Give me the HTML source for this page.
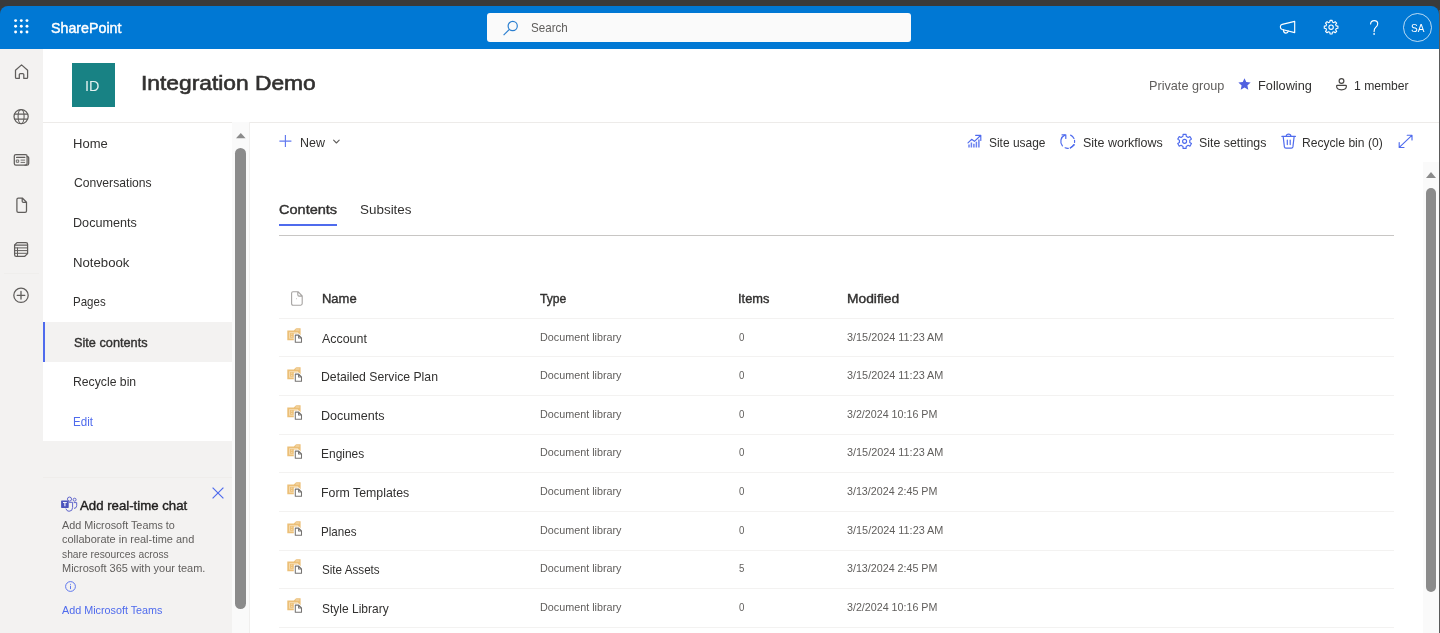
<!DOCTYPE html>
<html><head><meta charset="utf-8"><title>Integration Demo - Site contents</title>
<style>
html,body{margin:0;padding:0;}
body{width:1440px;height:633px;overflow:hidden;background:#fff;position:relative;font-family:"Liberation Sans", sans-serif;}
.t{position:absolute;white-space:nowrap;font-family:"Liberation Sans", sans-serif;transform-origin:0 50%;}
.b{position:absolute;}
svg{position:absolute;overflow:visible;}
</style></head><body>
<!-- window chrome strip -->
<div class="b" style="left:0;top:0;width:1440px;height:14px;background:#3a3a3a;"></div>
<!-- suite bar -->
<div class="b" style="left:0;top:5.5px;width:1439px;height:43px;background:#0078d4;border-radius:8px 8px 0 0;"></div>
<!-- right window edge -->
<div class="b" style="left:1439px;top:10px;width:1px;height:623px;background:#5a5a5a;"></div>
<!-- left rail -->
<div class="b" style="left:0;top:48.5px;width:43px;height:585px;background:#f3f2f1;"></div>
<!-- search box -->
<div class="b" style="left:487px;top:13px;width:424px;height:29px;background:#fafafa;border-radius:3px;"></div>
<!-- waffle -->
<svg style="left:14.3px;top:19.3px" width="14.6" height="14.6" viewBox="0 0 14.6 14.6" fill="#fff">
<circle cx="1.6" cy="1.6" r="1.45"/><circle cx="7.3" cy="1.6" r="1.45"/><circle cx="13" cy="1.6" r="1.45"/>
<circle cx="1.6" cy="7.3" r="1.45"/><circle cx="7.3" cy="7.3" r="1.45"/><circle cx="13" cy="7.3" r="1.45"/>
<circle cx="1.6" cy="13" r="1.45"/><circle cx="7.3" cy="13" r="1.45"/><circle cx="13" cy="13" r="1.45"/>
</svg>
<!-- search icon -->
<svg style="left:503px;top:20px" width="16" height="16" viewBox="0 0 16 16" fill="none" stroke="#2b7fd0" stroke-width="1.2">
<circle cx="9.7" cy="6" r="4.6"/><path d="M6.4 9.4 L0.6 15.2"/>
</svg>
<!-- topbar icons -->
<svg style="left:0;top:0" width="1440" height="48" viewBox="0 0 1440 48" fill="none" stroke="#fff" stroke-width="1.15" stroke-linejoin="round" stroke-linecap="round">
<path d="M1294.7 21.4 V32.6 L1282.2 29.5 Q1280.4 29 1280.4 27.3 V26.5 Q1280.4 24.9 1282.2 24.4 Z"/>
<path d="M1283.4 29.9 Q1283.6 33.2 1286 33.1 Q1287.9 33 1288.3 31.1"/>
<path d="M1330.02 20.38 L1332.18 20.38 L1332.34 22.05 L1333.87 22.68 L1335.16 21.62 L1336.68 23.14 L1335.62 24.43 L1336.25 25.96 L1337.92 26.12 L1337.92 28.28 L1336.25 28.44 L1335.62 29.97 L1336.68 31.26 L1335.16 32.78 L1333.87 31.72 L1332.34 32.35 L1332.18 34.02 L1330.02 34.02 L1329.86 32.35 L1328.33 31.72 L1327.04 32.78 L1325.52 31.26 L1326.58 29.97 L1325.95 28.44 L1324.28 28.28 L1324.28 26.12 L1325.95 25.96 L1326.58 24.43 L1325.52 23.14 L1327.04 21.62 L1328.33 22.68 L1329.86 22.05 Z" stroke-width="1.1"/>
<circle cx="1331.1" cy="27.2" r="2.2" stroke-width="1.1"/>
<path d="M1370.6 24 Q1370.8 20.6 1374.3 20.6 Q1377.7 20.6 1377.7 23.8 Q1377.7 25.8 1375.7 27.4 Q1374.1 28.7 1374.1 31.4"/><path d="M1374.1 33.4 V34.4" stroke-width="1.3"/>
</svg>
<!-- avatar -->
<div class="b" style="left:1403px;top:12.9px;width:27px;height:27px;border:1px solid rgba(255,255,255,0.72);border-radius:50%;"></div>
<!-- rail icons -->
<div class="b" style="left:4px;top:272.7px;width:35px;height:1px;background:#efeeec;"></div>
<svg style="left:0;top:0" width="60" height="320" viewBox="0 0 60 320" fill="none" stroke="#605e5c" stroke-width="1.25" stroke-linejoin="round" stroke-linecap="round">
<!-- home -->
<path d="M15.5 70.3 L21.55 64.9 L27.6 70.3 V77.4 Q27.6 78.4 26.6 78.4 H23.8 V74.6 Q23.8 73.5 22.7 73.5 H20.4 Q19.3 73.5 19.3 74.6 V78.4 H16.5 Q15.5 78.4 15.5 77.4 Z"/>
<!-- globe -->
<circle cx="21.1" cy="116.6" r="7.1"/><ellipse cx="21.1" cy="116.6" rx="3" ry="7.1" stroke-width="1.1"/><path d="M14.6 114.1 H27.6 M14.6 119.1 H27.6" stroke-width="1.1"/>
<!-- news -->
<rect x="14.3" y="154.5" width="12.8" height="10.7" rx="1.6"/>
<path d="M27.1 156.6 H27.5 Q28.7 156.6 28.7 157.8 V163.4 Q28.7 165.2 26.9 165.2 H25"/>
<path d="M16.6 157.4 H24.8" stroke-width="1.3"/><rect x="16.7" y="160" width="2" height="2.3" stroke-width="0.9"/><path d="M21 160.1 H24.7 M21 162.4 H24.7" stroke-width="0.9"/>
<!-- file -->
<path d="M18.3 198 H22.3 L26.5 202.2 V211 Q26.5 212.4 25.1 212.4 H18.3 Q16.9 212.4 16.9 211 V199.4 Q16.9 198 18.3 198 Z M22.2 198.2 V201.2 Q22.2 202.4 23.4 202.4 H26.3"/>
<!-- list -->
<path d="M17 242.6 H26 Q27.6 242.6 27.6 244.2 V253.6 L24.8 256.3 H16.2 Q14.6 256.3 14.6 254.7 V245 Z"/>
<path d="M15 245.1 H27.4" stroke-width="1.3"/><path d="M14.8 247.9 H27.4 M14.8 250.6 H27.4 M14.8 253.3 H27.2 M17.5 247.9 V256" stroke-width="1"/>
<!-- plus circle -->
<circle cx="21" cy="295.3" r="7.2"/><path d="M21 291.5 V299.1 M17.2 295.3 H24.8" stroke-width="1.3"/>
</svg>
<!-- site header -->
<div class="b" style="left:72.1px;top:63.2px;width:43.3px;height:43.5px;background:#188284;"></div>
<div class="b" style="left:43px;top:121.5px;width:1396px;height:1px;background:#edebe9;"></div>
<!-- star -->
<svg style="left:1238.3px;top:77.9px" width="13" height="12.1" viewBox="0 0 14 13" fill="#4f5fe0">
<path d="M7 0.2 L8.9 4.4 L13.6 4.9 L10.1 8 L11.1 12.6 L7 10.2 L2.9 12.6 L3.9 8 L0.4 4.9 L5.1 4.4 Z"/>
</svg>
<!-- person -->
<svg style="left:1336px;top:78px" width="11" height="13" viewBox="0 0 11 13" fill="none" stroke="#484644" stroke-width="1.15">
<circle cx="5.5" cy="3" r="2.4"/><path d="M1.3 7.3 H9.7 Q10.4 7.3 10.4 8 Q10.4 11.8 5.5 11.8 Q0.6 11.8 0.6 8 Q0.6 7.3 1.3 7.3 Z"/>
</svg>

<!-- left nav -->
<div class="b" style="left:43px;top:322px;width:189px;height:39.5px;background:#f3f2f1;"></div>
<div class="b" style="left:43px;top:322px;width:2px;height:39.5px;background:#4f6bed;"></div>
<div class="b" style="left:43px;top:441px;width:189px;height:192px;background:#f3f2f1;"></div>
<div class="b" style="left:43px;top:477px;width:189px;height:1px;background:#efedeb;"></div>
<!-- nav scrollbar -->
<div class="b" style="left:232px;top:122px;width:17px;height:511px;background:#fafafa;"></div>
<div class="b" style="left:249px;top:122px;width:1px;height:511px;background:#f0efee;"></div>
<div class="b" style="left:235px;top:148px;width:10.5px;height:461px;background:#8b8b8b;border-radius:5.5px;"></div>
<svg style="left:235.6px;top:132.6px" width="9.6" height="5.3" viewBox="0 0 9.6 5.3" fill="#8b8b8b"><path d="M0 5.3 L4.8 0 L9.6 5.3 Z"/></svg>
<!-- teams promo -->
<svg style="left:211.5px;top:486.5px" width="12" height="12" viewBox="0 0 12 12" stroke="#4f6bed" stroke-width="1.2" fill="none"><path d="M0.6 0.6 L11.4 11.4 M11.4 0.6 L0.6 11.4"/></svg>
<svg style="left:0;top:490px" width="100" height="30" viewBox="0 490 100 30" fill="none" stroke="#6166cc" stroke-width="1" stroke-linejoin="round">
<circle cx="69.5" cy="499.1" r="2.05"/>
<circle cx="74.6" cy="499.7" r="1.5"/>
<path d="M69 502.3 H72.6 V507.6 Q72.6 511.3 69 511.3 Q66.7 511.3 65.9 508.6"/>
<path d="M73.8 502.6 H76.7 V505.7 Q76.7 508.3 74 508.4"/>
<rect x="61.1" y="500.4" width="7.6" height="7.5" rx="0.6" fill="#4b53bc" stroke="none"/>
<path d="M63 502.5 H66.8 M64.9 502.5 V506.3" stroke="#f0f0fa" stroke-width="1.15"/>
</svg>
<svg style="left:64.5px;top:580.5px" width="11" height="11" viewBox="0 0 11 11" fill="none" stroke="#4f6bed" stroke-width="0.9"><circle cx="5.5" cy="5.5" r="4.9"/><path d="M5.5 4.8 V8.1 M5.5 2.9 V3.8"/></svg>

<!-- command bar -->
<svg style="left:0;top:120px" width="1440" height="40" viewBox="0 120 1440 40" fill="none" stroke="#4f6bed" stroke-width="1.2" stroke-linecap="round" stroke-linejoin="round">
<path d="M279.4 141.1 H291.4 M285.4 135.1 V147.1" stroke="#6179ef" stroke-width="1.15" stroke-linecap="butt"/>
<path d="M333.6 140.2 L336.4 143 L339.2 140.2" stroke="#605e5c" stroke-width="1.1"/>
<!-- usage -->
<path d="M968 142.8 L971.6 139.3 L974.4 141.3 L980.6 135.5 M975.6 135.3 H980.8 V140.4" stroke-width="1.15"/>
<path d="M969 147.6 V144.6 M971.4 147.6 V142.4 M973.9 147.6 V143.8 M976.4 147.6 V141.8 M978.9 147.6 V139.4" stroke-width="1.5" stroke-linecap="butt" stroke="#6b82f0"/>
<!-- workflows -->
<path d="M1062.41 145.84 A6.9 6.9 0 0 1 1064.78 135.15 M1070.62 135.15 A6.9 6.9 0 0 1 1073.95 138.48 M1074.53 140.44 A6.9 6.9 0 0 1 1074.53 142.36 M1073.79 144.64 A6.9 6.9 0 0 1 1070.28 147.80 M1068.42 148.26 A6.9 6.9 0 0 1 1065.12 147.80"/>
<path d="M1062 134.8 H1065.8 V138.4" />
<path d="M1070.4 148 L1074.4 144.9" />
<!-- settings gear -->
<path d="M1183.10 134.31 L1186.10 134.31 L1186.24 136.31 L1188.15 137.41 L1189.95 136.53 L1191.45 139.13 L1189.78 140.25 L1189.78 142.45 L1191.45 143.57 L1189.95 146.17 L1188.15 145.29 L1186.24 146.39 L1186.10 148.39 L1183.10 148.39 L1182.96 146.39 L1181.05 145.29 L1179.25 146.17 L1177.75 143.57 L1179.42 142.45 L1179.42 140.25 L1177.75 139.13 L1179.25 136.53 L1181.05 137.41 L1182.96 136.31 Z" stroke-width="1.15"/>
<circle cx="1184.6" cy="141.35" r="2" stroke-width="1.15"/>
<!-- bin -->
<path d="M1281.9 136.4 H1295.4 M1286.2 136.2 Q1286.4 134.2 1288.6 134.2 Q1290.8 134.2 1291 136.2 M1283.2 136.8 L1284.4 146.9 Q1284.6 148.2 1285.9 148.2 H1291.4 Q1292.7 148.2 1292.9 146.9 L1294.1 136.8 M1287.3 140 V144.6 M1290.2 140 V144.6"/>
<!-- expand -->
<path d="M1399.3 147.4 L1411.9 135.3 M1407.2 135.2 H1412 V140 M1399.2 142.6 V147.5 H1404" stroke-width="1.15"/>
</svg>
<!-- tabs -->
<div class="b" style="left:278.6px;top:224.2px;width:58.6px;height:1.8px;background:#4f6bed;"></div>
<div class="b" style="left:278.5px;top:235px;width:1115px;height:1px;background:#c8c6c4;"></div>
<!-- content scrollbar -->
<div class="b" style="left:1423px;top:162px;width:16px;height:471px;background:#fafafa;"></div>
<div class="b" style="left:1426px;top:188px;width:10px;height:404px;background:#8b8b8b;border-radius:5px;"></div>
<svg style="left:1426px;top:172px" width="10" height="6" viewBox="0 0 10 6" fill="#8b8b8b"><path d="M0 6 L5 0 L10 6 Z"/></svg>

<!-- table -->
<svg style="left:291px;top:291px" width="12" height="15" viewBox="0 0 12 15" fill="none" stroke="#a6a4a2" stroke-width="1.1" stroke-linejoin="round">
<path d="M2 0.7 H7 L11.2 5 V12.6 Q11.2 14.2 9.7 14.2 H2 Q0.6 14.2 0.6 12.6 V2.2 Q0.6 0.7 2 0.7 Z M6.8 0.9 V3.8 Q6.8 5.1 8 5.1 H11"/>
<circle cx="5.4" cy="7.8" r="0.4" fill="#605e5c" stroke="none"/>
</svg>
<div class="b" style="left:278.5px;top:317.80px;width:1115px;height:1px;background:#f3f2f1;"></div>
<div class="b" style="left:278.5px;top:356.42px;width:1115px;height:1px;background:#f3f2f1;"></div>
<div class="b" style="left:278.5px;top:395.04px;width:1115px;height:1px;background:#f3f2f1;"></div>
<div class="b" style="left:278.5px;top:433.66px;width:1115px;height:1px;background:#f3f2f1;"></div>
<div class="b" style="left:278.5px;top:472.28px;width:1115px;height:1px;background:#f3f2f1;"></div>
<div class="b" style="left:278.5px;top:510.90px;width:1115px;height:1px;background:#f3f2f1;"></div>
<div class="b" style="left:278.5px;top:549.52px;width:1115px;height:1px;background:#f3f2f1;"></div>
<div class="b" style="left:278.5px;top:588.14px;width:1115px;height:1px;background:#f3f2f1;"></div>
<div class="b" style="left:278.5px;top:626.76px;width:1115px;height:1px;background:#f3f2f1;"></div>
<svg style="left:287px;top:328.1px" width="16" height="15" viewBox="0 0 16 15">
<path d="M0.3 2.6 H6.8 L8.3 1 Q8.8 0.3 9.6 0.3 H13.6 V12.2 H0.3 Z" fill="#ecbf77"/>
<path d="M8.6 2 H12.4" stroke="#f7e2bd" stroke-width="0.9" fill="none"/>
<rect x="2.6" y="4.6" width="8" height="5.6" fill="none" stroke="#f6deb4" stroke-width="0.9"/>
<path d="M4 6.2 H5.4 M4 8.4 H5.4" stroke="#f6deb4" stroke-width="0.9"/>
<path d="M7.6 6.3 H11.6 L14.9 9.5 V14.3 H7.6 Z" fill="#fff" stroke="#fff" stroke-width="1.6"/>
<path d="M8.3 7.1 H11.7 L14.5 9.9 V14.3 H8.3 Z M11.6 7.2 V10 H14.4" fill="#fff" stroke="#757371" stroke-width="1.05" stroke-linejoin="round"/>
</svg>
<svg style="left:287px;top:366.6px" width="16" height="15" viewBox="0 0 16 15">
<path d="M0.3 2.6 H6.8 L8.3 1 Q8.8 0.3 9.6 0.3 H13.6 V12.2 H0.3 Z" fill="#ecbf77"/>
<path d="M8.6 2 H12.4" stroke="#f7e2bd" stroke-width="0.9" fill="none"/>
<rect x="2.6" y="4.6" width="8" height="5.6" fill="none" stroke="#f6deb4" stroke-width="0.9"/>
<path d="M4 6.2 H5.4 M4 8.4 H5.4" stroke="#f6deb4" stroke-width="0.9"/>
<path d="M7.6 6.3 H11.6 L14.9 9.5 V14.3 H7.6 Z" fill="#fff" stroke="#fff" stroke-width="1.6"/>
<path d="M8.3 7.1 H11.7 L14.5 9.9 V14.3 H8.3 Z M11.6 7.2 V10 H14.4" fill="#fff" stroke="#757371" stroke-width="1.05" stroke-linejoin="round"/>
</svg>
<svg style="left:287px;top:405.1px" width="16" height="15" viewBox="0 0 16 15">
<path d="M0.3 2.6 H6.8 L8.3 1 Q8.8 0.3 9.6 0.3 H13.6 V12.2 H0.3 Z" fill="#ecbf77"/>
<path d="M8.6 2 H12.4" stroke="#f7e2bd" stroke-width="0.9" fill="none"/>
<rect x="2.6" y="4.6" width="8" height="5.6" fill="none" stroke="#f6deb4" stroke-width="0.9"/>
<path d="M4 6.2 H5.4 M4 8.4 H5.4" stroke="#f6deb4" stroke-width="0.9"/>
<path d="M7.6 6.3 H11.6 L14.9 9.5 V14.3 H7.6 Z" fill="#fff" stroke="#fff" stroke-width="1.6"/>
<path d="M8.3 7.1 H11.7 L14.5 9.9 V14.3 H8.3 Z M11.6 7.2 V10 H14.4" fill="#fff" stroke="#757371" stroke-width="1.05" stroke-linejoin="round"/>
</svg>
<svg style="left:287px;top:443.6px" width="16" height="15" viewBox="0 0 16 15">
<path d="M0.3 2.6 H6.8 L8.3 1 Q8.8 0.3 9.6 0.3 H13.6 V12.2 H0.3 Z" fill="#ecbf77"/>
<path d="M8.6 2 H12.4" stroke="#f7e2bd" stroke-width="0.9" fill="none"/>
<rect x="2.6" y="4.6" width="8" height="5.6" fill="none" stroke="#f6deb4" stroke-width="0.9"/>
<path d="M4 6.2 H5.4 M4 8.4 H5.4" stroke="#f6deb4" stroke-width="0.9"/>
<path d="M7.6 6.3 H11.6 L14.9 9.5 V14.3 H7.6 Z" fill="#fff" stroke="#fff" stroke-width="1.6"/>
<path d="M8.3 7.1 H11.7 L14.5 9.9 V14.3 H8.3 Z M11.6 7.2 V10 H14.4" fill="#fff" stroke="#757371" stroke-width="1.05" stroke-linejoin="round"/>
</svg>
<svg style="left:287px;top:482.1px" width="16" height="15" viewBox="0 0 16 15">
<path d="M0.3 2.6 H6.8 L8.3 1 Q8.8 0.3 9.6 0.3 H13.6 V12.2 H0.3 Z" fill="#ecbf77"/>
<path d="M8.6 2 H12.4" stroke="#f7e2bd" stroke-width="0.9" fill="none"/>
<rect x="2.6" y="4.6" width="8" height="5.6" fill="none" stroke="#f6deb4" stroke-width="0.9"/>
<path d="M4 6.2 H5.4 M4 8.4 H5.4" stroke="#f6deb4" stroke-width="0.9"/>
<path d="M7.6 6.3 H11.6 L14.9 9.5 V14.3 H7.6 Z" fill="#fff" stroke="#fff" stroke-width="1.6"/>
<path d="M8.3 7.1 H11.7 L14.5 9.9 V14.3 H8.3 Z M11.6 7.2 V10 H14.4" fill="#fff" stroke="#757371" stroke-width="1.05" stroke-linejoin="round"/>
</svg>
<svg style="left:287px;top:520.6px" width="16" height="15" viewBox="0 0 16 15">
<path d="M0.3 2.6 H6.8 L8.3 1 Q8.8 0.3 9.6 0.3 H13.6 V12.2 H0.3 Z" fill="#ecbf77"/>
<path d="M8.6 2 H12.4" stroke="#f7e2bd" stroke-width="0.9" fill="none"/>
<rect x="2.6" y="4.6" width="8" height="5.6" fill="none" stroke="#f6deb4" stroke-width="0.9"/>
<path d="M4 6.2 H5.4 M4 8.4 H5.4" stroke="#f6deb4" stroke-width="0.9"/>
<path d="M7.6 6.3 H11.6 L14.9 9.5 V14.3 H7.6 Z" fill="#fff" stroke="#fff" stroke-width="1.6"/>
<path d="M8.3 7.1 H11.7 L14.5 9.9 V14.3 H8.3 Z M11.6 7.2 V10 H14.4" fill="#fff" stroke="#757371" stroke-width="1.05" stroke-linejoin="round"/>
</svg>
<svg style="left:287px;top:559.1px" width="16" height="15" viewBox="0 0 16 15">
<path d="M0.3 2.6 H6.8 L8.3 1 Q8.8 0.3 9.6 0.3 H13.6 V12.2 H0.3 Z" fill="#ecbf77"/>
<path d="M8.6 2 H12.4" stroke="#f7e2bd" stroke-width="0.9" fill="none"/>
<rect x="2.6" y="4.6" width="8" height="5.6" fill="none" stroke="#f6deb4" stroke-width="0.9"/>
<path d="M4 6.2 H5.4 M4 8.4 H5.4" stroke="#f6deb4" stroke-width="0.9"/>
<path d="M7.6 6.3 H11.6 L14.9 9.5 V14.3 H7.6 Z" fill="#fff" stroke="#fff" stroke-width="1.6"/>
<path d="M8.3 7.1 H11.7 L14.5 9.9 V14.3 H8.3 Z M11.6 7.2 V10 H14.4" fill="#fff" stroke="#757371" stroke-width="1.05" stroke-linejoin="round"/>
</svg>
<svg style="left:287px;top:597.6px" width="16" height="15" viewBox="0 0 16 15">
<path d="M0.3 2.6 H6.8 L8.3 1 Q8.8 0.3 9.6 0.3 H13.6 V12.2 H0.3 Z" fill="#ecbf77"/>
<path d="M8.6 2 H12.4" stroke="#f7e2bd" stroke-width="0.9" fill="none"/>
<rect x="2.6" y="4.6" width="8" height="5.6" fill="none" stroke="#f6deb4" stroke-width="0.9"/>
<path d="M4 6.2 H5.4 M4 8.4 H5.4" stroke="#f6deb4" stroke-width="0.9"/>
<path d="M7.6 6.3 H11.6 L14.9 9.5 V14.3 H7.6 Z" fill="#fff" stroke="#fff" stroke-width="1.6"/>
<path d="M8.3 7.1 H11.7 L14.5 9.9 V14.3 H8.3 Z M11.6 7.2 V10 H14.4" fill="#fff" stroke="#757371" stroke-width="1.05" stroke-linejoin="round"/>
</svg>

<div id="txt" style="position:absolute;left:0;top:0;width:1440px;height:633px;will-change:transform;">
<span class="t" id="t0" style="left:51.25px;top:18.00px;font-size:14.8px;line-height:20px;font-weight:400;color:#ffffff;-webkit-text-stroke:0.44px #ffffff;transform:scaleX(0.9624);">SharePoint</span>
<span class="t" id="t1" style="left:530.75px;top:18.00px;font-size:13.4px;line-height:19px;font-weight:400;color:#605e5c;transform:scaleX(0.8683);">Search</span>
<span class="t" id="t2" style="left:1411.20px;top:20.00px;font-size:11.6px;line-height:16px;font-weight:400;color:#ffffff;transform:scaleX(0.8644);">SA</span>
<span class="t" id="t3" style="left:85.40px;top:76.00px;font-size:14.4px;line-height:20px;font-weight:400;color:#e4f1f0;transform:scaleX(1.0001);">ID</span>
<span class="t" id="t4" style="left:141.11px;top:69.00px;font-size:20.9px;line-height:27px;font-weight:400;color:#323130;-webkit-text-stroke:0.63px #323130;transform:scaleX(1.0906);">Integration Demo</span>
<span class="t" id="t5" style="left:1148.70px;top:77.00px;font-size:12.7px;line-height:18px;font-weight:400;color:#605e5c;transform:scaleX(0.9986);">Private group</span>
<span class="t" id="t6" style="left:1258.20px;top:77.00px;font-size:12.7px;line-height:18px;font-weight:400;color:#323130;transform:scaleX(1.0050);">Following</span>
<span class="t" id="t7" style="left:1353.90px;top:77.00px;font-size:12.7px;line-height:18px;font-weight:400;color:#323130;transform:scaleX(0.9570);">1 member</span>
<span class="t" id="t8" style="left:73.33px;top:134.00px;font-size:13.5px;line-height:19px;font-weight:400;color:#323130;transform:scaleX(0.9651);">Home</span>
<span class="t" id="t9" style="left:74.30px;top:173.00px;font-size:13.5px;line-height:19px;font-weight:400;color:#323130;transform:scaleX(0.9001);">Conversations</span>
<span class="t" id="t10" style="left:73.36px;top:213.00px;font-size:13.5px;line-height:19px;font-weight:400;color:#323130;transform:scaleX(0.9359);">Documents</span>
<span class="t" id="t11" style="left:73.32px;top:253.00px;font-size:13.5px;line-height:19px;font-weight:400;color:#323130;transform:scaleX(0.9765);">Notebook</span>
<span class="t" id="t12" style="left:73.45px;top:292.00px;font-size:13.5px;line-height:19px;font-weight:400;color:#323130;transform:scaleX(0.8527);">Pages</span>
<span class="t" id="t13" style="left:74.30px;top:333.00px;font-size:13.5px;line-height:19px;font-weight:400;color:#323130;-webkit-text-stroke:0.40px #323130;transform:scaleX(0.9426);">Site contents</span>
<span class="t" id="t14" style="left:73.39px;top:372.00px;font-size:13.5px;line-height:19px;font-weight:400;color:#323130;transform:scaleX(0.9052);">Recycle bin</span>
<span class="t" id="t15" style="left:73.38px;top:413.00px;font-size:12.6px;line-height:18px;font-weight:400;color:#4f6bed;transform:scaleX(0.9197);">Edit</span>
<span class="t" id="t16" style="left:80.00px;top:496.00px;font-size:13.4px;line-height:19px;font-weight:400;color:#201f1e;-webkit-text-stroke:0.40px #201f1e;transform:scaleX(0.9868);">Add real-time chat</span>
<span class="t" id="t17" style="left:61.50px;top:516.00px;font-size:11.7px;line-height:17px;font-weight:400;color:#605e5c;transform:scaleX(0.9257);">Add Microsoft Teams to</span>
<span class="t" id="t18" style="left:61.50px;top:530.00px;font-size:11.7px;line-height:17px;font-weight:400;color:#605e5c;transform:scaleX(0.9382);">collaborate in real-time and</span>
<span class="t" id="t19" style="left:61.50px;top:545.00px;font-size:11.7px;line-height:17px;font-weight:400;color:#605e5c;transform:scaleX(0.8781);">share resources across</span>
<span class="t" id="t20" style="left:61.50px;top:559.00px;font-size:11.7px;line-height:17px;font-weight:400;color:#605e5c;transform:scaleX(0.9396);">Microsoft 365 with your team.</span>
<span class="t" id="t21" style="left:61.50px;top:601.00px;font-size:11.7px;line-height:17px;font-weight:400;color:#4f6bed;transform:scaleX(0.9224);">Add Microsoft Teams</span>
<span class="t" id="t22" style="left:299.88px;top:133.00px;font-size:13.5px;line-height:19px;font-weight:400;color:#323130;transform:scaleX(0.9216);">New</span>
<span class="t" id="t23" style="left:989.20px;top:133.00px;font-size:12.8px;line-height:19px;font-weight:400;color:#323130;transform:scaleX(0.9328);">Site usage</span>
<span class="t" id="t24" style="left:1082.80px;top:133.00px;font-size:12.8px;line-height:19px;font-weight:400;color:#323130;transform:scaleX(0.9756);">Site workflows</span>
<span class="t" id="t25" style="left:1199.20px;top:133.00px;font-size:12.8px;line-height:19px;font-weight:400;color:#323130;transform:scaleX(0.9667);">Site settings</span>
<span class="t" id="t26" style="left:1302.35px;top:133.00px;font-size:12.8px;line-height:19px;font-weight:400;color:#323130;transform:scaleX(0.9455);">Recycle bin (0)</span>
<span class="t" id="t27" style="left:278.90px;top:200.00px;font-size:13.7px;line-height:19px;font-weight:400;color:#323130;-webkit-text-stroke:0.41px #323130;transform:scaleX(1.0612);">Contents</span>
<span class="t" id="t28" style="left:359.80px;top:200.00px;font-size:13.7px;line-height:19px;font-weight:400;color:#323130;transform:scaleX(0.9819);">Subsites</span>
<span class="t" id="t29" style="left:321.72px;top:289.00px;font-size:13.2px;line-height:19px;font-weight:400;color:#323130;-webkit-text-stroke:0.40px #323130;transform:scaleX(0.9840);">Name</span>
<span class="t" id="t30" style="left:539.80px;top:289.00px;font-size:13.2px;line-height:19px;font-weight:400;color:#323130;-webkit-text-stroke:0.40px #323130;transform:scaleX(0.9202);">Type</span>
<span class="t" id="t31" style="left:737.83px;top:289.00px;font-size:13.2px;line-height:19px;font-weight:400;color:#323130;-webkit-text-stroke:0.40px #323130;transform:scaleX(0.9732);">Items</span>
<span class="t" id="t32" style="left:846.65px;top:289.00px;font-size:13.2px;line-height:19px;font-weight:400;color:#323130;-webkit-text-stroke:0.40px #323130;transform:scaleX(1.0472);">Modified</span>
<span class="t" id="t33" style="left:322.30px;top:329.00px;font-size:13.2px;line-height:19px;font-weight:400;color:#323130;transform:scaleX(0.9419);">Account</span>
<span class="t" id="t34" style="left:539.80px;top:329.00px;font-size:11.2px;line-height:16px;font-weight:400;color:#605e5c;transform:scaleX(0.9640);">Document library</span>
<span class="t" id="t35" style="left:738.80px;top:329.00px;font-size:11.2px;line-height:16px;font-weight:400;color:#605e5c;transform:scaleX(0.8667);">0</span>
<span class="t" id="t36" style="left:847.40px;top:329.00px;font-size:11.2px;line-height:16px;font-weight:400;color:#605e5c;transform:scaleX(0.9708);">3/15/2024 11:23 AM</span>
<span class="t" id="t37" style="left:321.37px;top:367.00px;font-size:13.2px;line-height:19px;font-weight:400;color:#323130;transform:scaleX(0.9275);">Detailed Service Plan</span>
<span class="t" id="t38" style="left:539.80px;top:367.00px;font-size:11.2px;line-height:16px;font-weight:400;color:#605e5c;transform:scaleX(0.9640);">Document library</span>
<span class="t" id="t39" style="left:738.80px;top:367.00px;font-size:11.2px;line-height:16px;font-weight:400;color:#605e5c;transform:scaleX(0.8667);">0</span>
<span class="t" id="t40" style="left:847.40px;top:367.00px;font-size:11.2px;line-height:16px;font-weight:400;color:#605e5c;transform:scaleX(0.9708);">3/15/2024 11:23 AM</span>
<span class="t" id="t41" style="left:321.35px;top:406.00px;font-size:13.2px;line-height:19px;font-weight:400;color:#323130;transform:scaleX(0.9530);">Documents</span>
<span class="t" id="t42" style="left:539.80px;top:406.00px;font-size:11.2px;line-height:16px;font-weight:400;color:#605e5c;transform:scaleX(0.9640);">Document library</span>
<span class="t" id="t43" style="left:738.80px;top:406.00px;font-size:11.2px;line-height:16px;font-weight:400;color:#605e5c;transform:scaleX(0.8667);">0</span>
<span class="t" id="t44" style="left:847.40px;top:406.00px;font-size:11.2px;line-height:16px;font-weight:400;color:#605e5c;transform:scaleX(0.9562);">3/2/2024 10:16 PM</span>
<span class="t" id="t45" style="left:321.39px;top:444.00px;font-size:13.2px;line-height:19px;font-weight:400;color:#323130;transform:scaleX(0.9073);">Engines</span>
<span class="t" id="t46" style="left:539.80px;top:444.00px;font-size:11.2px;line-height:16px;font-weight:400;color:#605e5c;transform:scaleX(0.9640);">Document library</span>
<span class="t" id="t47" style="left:738.80px;top:444.00px;font-size:11.2px;line-height:16px;font-weight:400;color:#605e5c;transform:scaleX(0.8667);">0</span>
<span class="t" id="t48" style="left:847.40px;top:444.00px;font-size:11.2px;line-height:16px;font-weight:400;color:#605e5c;transform:scaleX(0.9708);">3/15/2024 11:23 AM</span>
<span class="t" id="t49" style="left:321.36px;top:483.00px;font-size:13.2px;line-height:19px;font-weight:400;color:#323130;transform:scaleX(0.9357);">Form Templates</span>
<span class="t" id="t50" style="left:539.80px;top:483.00px;font-size:11.2px;line-height:16px;font-weight:400;color:#605e5c;transform:scaleX(0.9640);">Document library</span>
<span class="t" id="t51" style="left:738.80px;top:483.00px;font-size:11.2px;line-height:16px;font-weight:400;color:#605e5c;transform:scaleX(0.8667);">0</span>
<span class="t" id="t52" style="left:847.40px;top:483.00px;font-size:11.2px;line-height:16px;font-weight:400;color:#605e5c;transform:scaleX(0.9562);">3/13/2024 2:45 PM</span>
<span class="t" id="t53" style="left:321.42px;top:522.00px;font-size:13.2px;line-height:19px;font-weight:400;color:#323130;transform:scaleX(0.8810);">Planes</span>
<span class="t" id="t54" style="left:539.80px;top:522.00px;font-size:11.2px;line-height:16px;font-weight:400;color:#605e5c;transform:scaleX(0.9640);">Document library</span>
<span class="t" id="t55" style="left:738.80px;top:522.00px;font-size:11.2px;line-height:16px;font-weight:400;color:#605e5c;transform:scaleX(0.8667);">0</span>
<span class="t" id="t56" style="left:847.40px;top:522.00px;font-size:11.2px;line-height:16px;font-weight:400;color:#605e5c;transform:scaleX(0.9708);">3/15/2024 11:23 AM</span>
<span class="t" id="t57" style="left:322.30px;top:560.00px;font-size:13.2px;line-height:19px;font-weight:400;color:#323130;transform:scaleX(0.8844);">Site Assets</span>
<span class="t" id="t58" style="left:539.80px;top:560.00px;font-size:11.2px;line-height:16px;font-weight:400;color:#605e5c;transform:scaleX(0.9640);">Document library</span>
<span class="t" id="t59" style="left:738.80px;top:560.00px;font-size:11.2px;line-height:16px;font-weight:400;color:#605e5c;transform:scaleX(0.8667);">5</span>
<span class="t" id="t60" style="left:847.40px;top:560.00px;font-size:11.2px;line-height:16px;font-weight:400;color:#605e5c;transform:scaleX(0.9562);">3/13/2024 2:45 PM</span>
<span class="t" id="t61" style="left:322.30px;top:599.00px;font-size:13.2px;line-height:19px;font-weight:400;color:#323130;transform:scaleX(0.9091);">Style Library</span>
<span class="t" id="t62" style="left:539.80px;top:599.00px;font-size:11.2px;line-height:16px;font-weight:400;color:#605e5c;transform:scaleX(0.9640);">Document library</span>
<span class="t" id="t63" style="left:738.80px;top:599.00px;font-size:11.2px;line-height:16px;font-weight:400;color:#605e5c;transform:scaleX(0.8667);">0</span>
<span class="t" id="t64" style="left:847.40px;top:599.00px;font-size:11.2px;line-height:16px;font-weight:400;color:#605e5c;transform:scaleX(0.9562);">3/2/2024 10:16 PM</span>
</div>
</body></html>
